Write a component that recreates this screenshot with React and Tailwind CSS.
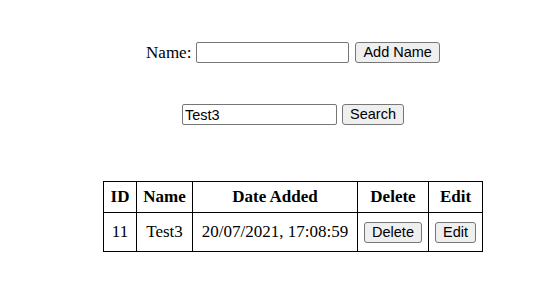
import React, { useState } from "react";

const ctrl = "font-['Liberation_Sans',Arial,sans-serif] text-[14.5px] leading-[17px] text-black";
const inputCls = `${ctrl} h-[21px] border border-[#767676] rounded-[2px] px-[2px] bg-white outline-none`;
const btnCls = `${ctrl} h-[21px] border border-[#767676] rounded-[3px] px-[7px] bg-[#efefef]`;

export default function App() {
  const [name, setName] = useState("");
  const [search, setSearch] = useState("Test3");
  const rows = [{ id: 11, name: "Test3", date: "20/07/2021, 17:08:59" }];

  return (
    <div className="w-[546px] h-[293px] bg-white pl-[40px] font-['Liberation_Serif','Times_New_Roman',serif] text-[17px] text-black">
      <div className="flex items-center justify-center gap-[5px] pt-[42px]">
        <span className="leading-[18px]">Name:</span>
        <input
          type="text"
          value={name}
          onChange={(e) => setName(e.target.value)}
          className={`${inputCls} w-[153px]`}
        />
        <button className={`${btnCls} ml-[1px]`}>Add Name</button>
      </div>

      <div className="flex items-center justify-center gap-[5px] mt-[41px]">
        <input
          type="text"
          value={search}
          onChange={(e) => setSearch(e.target.value)}
          className={`${inputCls} w-[155px]`}
        />
        <button className={btnCls}>Search</button>
      </div>

      <div className="flex justify-center mt-[56px]">
        <table className="border-collapse table-fixed w-[379px]">
          <colgroup>
            <col className="w-[33px]" />
            <col className="w-[56px]" />
            <col className="w-[165px]" />
            <col className="w-[71px]" />
            <col className="w-[54px]" />
          </colgroup>
          <thead>
            <tr>
              {["ID", "Name", "Date Added", "Delete", "Edit"].map((h) => (
                <th key={h} className="border border-black py-[6px] px-0 font-bold leading-[18px] text-center">
                  {h}
                </th>
              ))}
            </tr>
          </thead>
          <tbody>
            {rows.map((r) => (
              <tr key={r.id}>
                <td className="border border-black py-[7px] leading-[18px] text-center">{r.id}</td>
                <td className="border border-black py-[7px] leading-[18px] text-center">{r.name}</td>
                <td className="border border-black py-[7px] leading-[18px] text-center">{r.date}</td>
                <td className="border border-black py-[6px] text-center">
                  <button className={`${btnCls} h-[20px] leading-[16px]`}>Delete</button>
                </td>
                <td className="border border-black py-[6px] text-center">
                  <button className={`${btnCls} h-[20px] leading-[16px]`}>Edit</button>
                </td>
              </tr>
            ))}
          </tbody>
        </table>
      </div>
    </div>
  );
}
